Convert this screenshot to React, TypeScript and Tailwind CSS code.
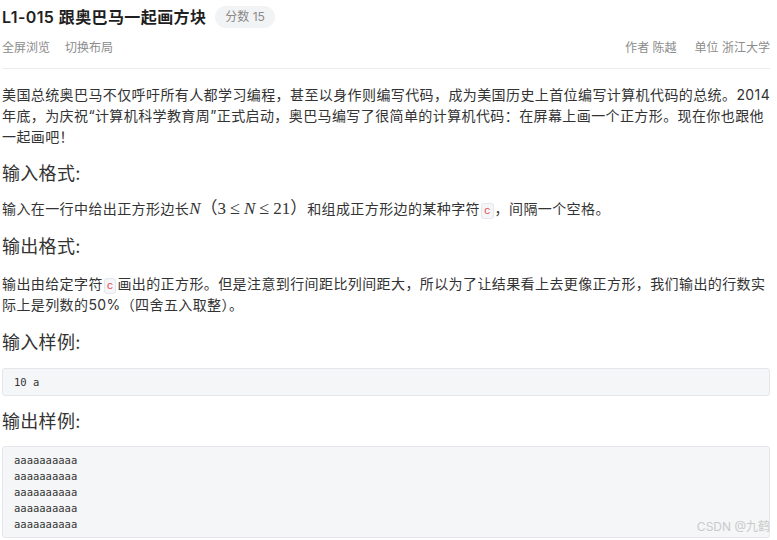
import React from "react";

const sans = "font-['Inter','Noto_Sans_CJK_SC',sans-serif]";

function InlineCode({ children }: { children: React.ReactNode }) {
  return (
    <code className="mx-[1px] rounded-[3px] border border-[#e5e7eb] bg-[#f5f6f8] px-[2px] py-[1px] font-['Liberation_Mono',monospace] text-[11px] leading-none tracking-normal text-[#e5484d]">
      {children}
    </code>
  );
}

function Leq() {
  return <span className="mx-[4px] text-[18px]">≤</span>;
}

function Heading({ children, className }: { children: React.ReactNode; className: string }) {
  return (
    <h3 className={`${className} text-[18px] leading-[27px] font-normal tracking-[0.3px] text-[#333]`}>
      {children}
    </h3>
  );
}

function Sample({ lines }: { lines: string[] }) {
  return (
    <pre className="w-[768px] rounded-[3px] border border-[#e4e6ea] bg-[#f5f6f8] px-[11px] py-[5px] font-['DejaVu_Sans_Mono',monospace] text-[10.5px] leading-[16px] tracking-normal text-[#333]">
      {lines.join("\n")}
    </pre>
  );
}

export default function App() {
  const out = Array.from({ length: 5 }, () => "aaaaaaaaaa");
  return (
    <div className={`${sans} w-[777px] bg-white pl-[2px] pr-[3px] text-[#333]`}>
      {/* title row */}
      <div className="flex h-[34px] items-center gap-[9px]">
        <h1 className="text-[16px] font-semibold tracking-[0.4px] text-[#1f1f1f]">L1-015 跟奥巴马一起画方块</h1>
        <span className="rounded-full bg-[#f2f3f5] px-[10px] py-[3px] text-[12px] leading-[16px] text-[#8a8a8a]">分数 15</span>
      </div>
      <div className="flex h-[28px] w-[768px] items-center justify-between text-[12px] text-[#8c8c8c]">
        <div className="flex gap-[15px]">
          <span>全屏浏览</span>
          <span>切换布局</span>
        </div>
        <div className="flex gap-[18px]">
          <span>作者 陈越</span>
          <span>单位 浙江大学</span>
        </div>
      </div>
      <div className="mt-[6px] h-px w-[768px] bg-[#ececec]" />

      <div className="mt-[15px] w-[772px] text-[14px] leading-[21px] tracking-[0.4px]">
        <p>
          美国总统奥巴马不仅呼吁所有人都学习编程，甚至以身作则编写代码，成为美国历史上首位编写计算机代码的总统。2014年底，为庆祝“计算机科学教育周”正式启动，奥巴马编写了很简单的计算机代码：在屏幕上画一个正方形。现在你也跟他一起画吧！
        </p>

        <Heading className="mt-[13px]">输入格式:</Heading>
        <p className="mt-[11px]">
          输入在一行中给出正方形边长
          <span className="font-['Liberation_Serif','Noto_Sans_CJK_SC',serif] text-[17px] leading-none tracking-normal">
            <i>N</i>（3<Leq /><i>N</i><Leq />21）
          </span>
          和组成正方形边的某种字符<InlineCode>c</InlineCode>，间隔一个空格。
        </p>

        <Heading className="mt-[14px]">输出格式:</Heading>
        <p className="mt-[13px]">
          输出由给定字符<InlineCode>c</InlineCode>画出的正方形。但是注意到行间距比列间距大，所以为了让结果看上去更像正方形，我们输出的行数实际上是列数的50%（四舍五入取整）。
        </p>

        <Heading className="mt-[14px]">输入样例:</Heading>
        <div className="mt-[12px]">
          <Sample lines={["10 a"]} />
        </div>

        <Heading className="mt-[12px]">输出样例:</Heading>
        <div className="relative mt-[11px] w-[768px]">
          <Sample lines={out} />
          <span className="absolute right-0 bottom-[3px] text-[12px] leading-[16px] tracking-normal text-[#cacaca]">CSDN @九鹤</span>
        </div>
      </div>
    </div>
  );
}
